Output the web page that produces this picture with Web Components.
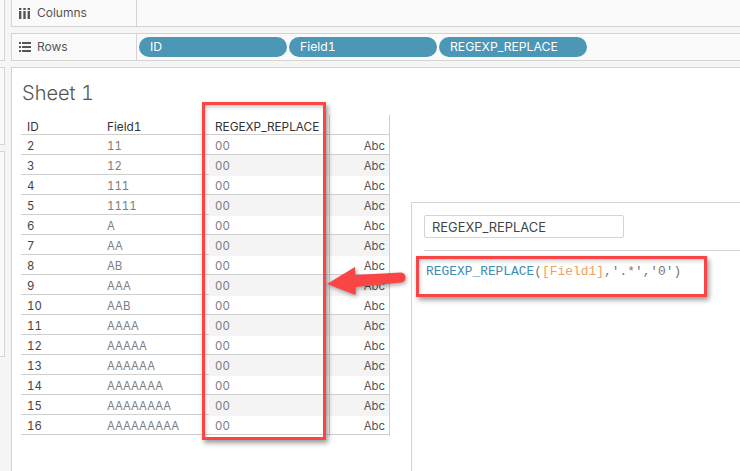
<!DOCTYPE html>
<html>
<head>
<meta charset="utf-8">
<title>Sheet 1</title>
<style>
  html, body { margin: 0; height: 471px; overflow: hidden; background: #f5f5f5; }
  body { font-family: Inter, "Liberation Sans", sans-serif; font-variant-numeric: tabular-nums; }
</style>
</head>
<body>
<app-shell>
  <shelf-bar slot="shelves" label="Columns" icon="columns"></shelf-bar>
  <shelf-bar slot="shelves" label="Rows" icon="rows">
    <data-pill>ID</data-pill>
    <data-pill>Field1</data-pill>
    <data-pill>REGEXP_REPLACE</data-pill>
  </shelf-bar>
  <sheet-view slot="main" title-text="Sheet 1">
    <cross-tab slot="table"></cross-tab>
    <calc-editor slot="editor" name="REGEXP_REPLACE"></calc-editor>
  </sheet-view>
</app-shell>

<script>
// App frame: thin rail of cut off panels on the left, shelves and sheet on the right
class AppShell extends HTMLElement {
  constructor() {
    super();
    this.attachShadow({ mode: 'open' });
    this.shadowRoot.innerHTML = `
      <style>
        :host { display: grid; grid-template-columns: 5px 1fr; column-gap: 6px; height: 471px; }
        .rail { display: flex; flex-direction: column; gap: 6px; }
        .rail div { background: #fafafa; border: solid #d4d4d4; border-width: 0 1px 1px 0; box-sizing: border-box; }
        .rail .a { height: 61px; }
        .rail .b { height: 78px; border-top-width: 1px; }
        .rail .c { height: 206px; border-top-width: 1px; }
        .stack { display: flex; flex-direction: column; gap: 6px; min-width: 0; }
      </style>
      <div class="rail"><div class="a"></div><div class="b"></div><div class="c"></div></div>
      <div class="stack">
        <slot name="shelves"></slot>
        <slot name="main"></slot>
      </div>
    `;
  }
}

class ShelfBar extends HTMLElement {
  constructor() {
    super();
    this.attachShadow({ mode: 'open' });
  }

  connectedCallback() {
    const columns = this.getAttribute('icon') === 'columns';
    const icon = columns
      ? `<svg width="11" height="11" viewBox="0 0 11 11" fill="#555">
           <rect x="0" y="0" width="2.4" height="2"/><rect x="0" y="3" width="2.4" height="8"/>
           <rect x="4.3" y="0" width="2.4" height="2"/><rect x="4.3" y="3" width="2.4" height="8"/>
           <rect x="8.6" y="0" width="2.4" height="2"/><rect x="8.6" y="3" width="2.4" height="8"/>
         </svg>`
      : `<svg width="12" height="10" viewBox="0 0 12 10" fill="#555">
           <rect x="0" y="0" width="2" height="2"/><rect x="3" y="0" width="9" height="2"/>
           <rect x="0" y="4" width="2" height="2"/><rect x="3" y="4" width="9" height="2"/>
           <rect x="0" y="8" width="2" height="2"/><rect x="3" y="8" width="9" height="2"/>
         </svg>`;
    this.shadowRoot.innerHTML = `
      <style>
        :host {
          display: flex;
          box-sizing: border-box;
          background: #fafafa;
          border: solid #d4d4d4;
          border-width: 0 0 1px 1px;
          height: ${columns ? 27 : 28}px;
          ${columns ? '' : 'border-top-width: 1px;'}
        }
        .head {
          flex: 0 0 125px;
          box-sizing: border-box;
          border-right: 1px solid #d4d4d4;
          display: flex;
          align-items: center;
          gap: 6px;
          padding-left: 7px;
          color: #555;
          font-size: 12px;
        }
        .icon { width: 12px; display: flex; }
        .label { position: relative; top: -1px; }
        .pills { display: flex; gap: 2px; align-items: center; padding-left: 2px; }
      </style>
      <div class="head"><span class="icon">${icon}</span><span class="label">${this.getAttribute('label')}</span></div>
      <div class="pills"><slot></slot></div>
    `;
  }
}

class DataPill extends HTMLElement {
  constructor() {
    super();
    this.attachShadow({ mode: 'open' });
    this.shadowRoot.innerHTML = `
      <style>
        :host {
          display: block;
          box-sizing: border-box;
          width: 148px;
          height: 20px;
          line-height: 19px;
          padding-left: 11px;
          border-radius: 10px;
          background: #4b97b5;
          color: #fff;
          font-size: 12.2px;
        }
      </style>
      <slot></slot>
    `;
  }
}

// Sheet area with title, table, and the two red callouts on top
class SheetView extends HTMLElement {
  constructor() {
    super();
    this.attachShadow({ mode: 'open' });
  }

  connectedCallback() {
    this.shadowRoot.innerHTML = `
      <style>
        :host {
          display: block;
          position: relative;
          box-sizing: border-box;
          height: 404px;
          background: #fff;
          border: solid #d4d4d4;
          border-width: 1px 0 0 1px;
        }
        .body { display: flex; align-items: flex-start; padding-left: 9px; }
        h1 {
          margin: 0;
          height: 47px;
          box-sizing: border-box;
          padding: 10px 0 0 1px;
          font-size: 20px;
          line-height: 30px;
          font-weight: 300;
          color: #555;
        }
        .editor { margin: 134px 0 0 21px; flex: 1; min-width: 0; }
        .mark {
          position: absolute;
          box-sizing: border-box;
          border: 3px solid #f94545;
          box-shadow: 2px 3px 5px rgba(0,0,0,.4), inset 2px 3px 5px -2px rgba(0,0,0,.3);
        }
        .col { left: 190px; top: 34px; width: 124px; height: 338px; }
        .formula { left: 404px; top: 188px; width: 291px; height: 41px; }
        svg { position: absolute; left: 315px; top: 197px; filter: drop-shadow(1px 2px 2px rgba(0,0,0,.35)); }
      </style>
      <div class="body">
        <div>
          <h1>${this.getAttribute('title-text')}</h1>
          <slot name="table"></slot>
        </div>
        <div class="editor"><slot name="editor"></slot></div>
      </div>
      <div class="mark col"></div>
      <div class="mark formula"></div>
      <svg width="80" height="32" viewBox="0 0 80 32">
        <path d="M0 19 L28 2 L28.500 10 L74 7.500 Q78.500 8 78.500 12.500 Q78.500 17 74 17.500 L29 22 L28.500 30 Z" fill="#f94545"/>
      </svg>
    `;
  }
}

class CrossTab extends HTMLElement {
  constructor() {
    super();
    this.attachShadow({ mode: 'open' });
  }

  connectedCallback() {
    const rows = [
      [2, '11'], [3, '12'], [4, '111'], [5, '1111'], [6, 'A'], [7, 'AA'], [8, 'AB'], [9, 'AAA'],
      [10, 'AAB'], [11, 'AAAA'], [12, 'AAAAA'], [13, 'AAAAAA'], [14, 'AAAAAAA'], [15, 'AAAAAAAA'], [16, 'AAAAAAAAA']
    ];
    this.shadowRoot.innerHTML = `
      <style>
        :host { display: block; width: 369px; font-size: 11.4px; }
        .row {
          display: grid;
          grid-template-columns: 80px 108px 120px 61px;
          height: 20px;
          box-sizing: border-box;
          border-bottom: 1px solid #cfcfcf;
          line-height: 20px;
        }
        .row > div { padding: 1px 0 0 6px; white-space: nowrap; box-sizing: border-box; }
        .row > .last { padding: 1px 4px 0 0; }
        .row.head { font-size: 11.8px; color: #333; }
        .row.head > div { padding-top: 2px; }
        .id { color: #444; }
        .val { color: #7d7d7d; }
        .last { border-left: 1px solid #cfcfcf; border-right: 1px solid #cfcfcf; color: #555; text-align: right; }
        .row.alt .shade { background: #f4f4f4; }
      </style>
      <div class="row head">
        <div>ID</div><div>Field1</div><div>REGEXP_REPLACE</div><div class="last"></div>
      </div>
      ${rows.map((r, i) => `
        <div class="row ${i % 2 ? 'alt' : ''}">
          <div class="id">${r[0]}</div>
          <div class="val">${r[1]}</div>
          <div class="val shade">00</div>
          <div class="last shade">Abc</div>
        </div>
      `).join('')}
    `;
  }
}

class CalcEditor extends HTMLElement {
  constructor() {
    super();
    this.attachShadow({ mode: 'open' });
  }

  connectedCallback() {
    this.shadowRoot.innerHTML = `
      <style>
        :host {
          display: block;
          box-sizing: border-box;
          height: 270px;
          background: #fff;
          border: solid #d4d4d4;
          border-width: 1px 0 0 1px;
          padding: 12px 0 0 12px;
        }
        .name {
          box-sizing: border-box;
          width: 200px;
          height: 23px;
          line-height: 23px;
          padding-left: 7px;
          border: 1px solid #d4d4d4;
          border-radius: 2px;
          font-size: 12.9px;
          color: #444;
        }
        hr { margin: 12px 0 0; border: 0; border-top: 1px solid #d4d4d4; }
        .code {
          margin: 13px 0 0 2px;
          font: 12.9px/16px "Liberation Mono", monospace;
          color: #777;
          white-space: pre;
        }
        .fn { color: #3d8db3; }
        .field { color: #f0a060; }
      </style>
      <div class="name">${this.getAttribute('name')}</div>
      <hr>
      <div class="code"><span class="fn">REGEXP_REPLACE</span>(<span class="field">[Field1]</span>,'.*','0')</div>
    `;
  }
}

customElements.define('app-shell', AppShell);
customElements.define('shelf-bar', ShelfBar);
customElements.define('data-pill', DataPill);
customElements.define('sheet-view', SheetView);
customElements.define('cross-tab', CrossTab);
customElements.define('calc-editor', CalcEditor);
</script>
</body>
</html>
